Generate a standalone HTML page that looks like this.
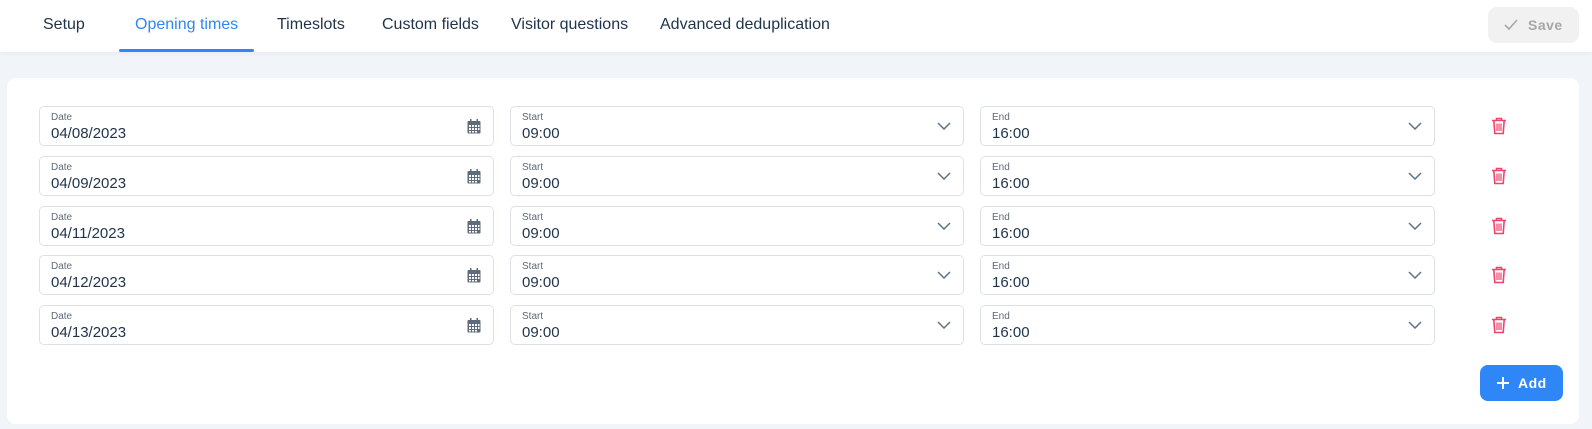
<!DOCTYPE html>
<html><head><style>
*{box-sizing:border-box;margin:0;padding:0}
body{width:1592px;height:429px;background:#f1f5f9;font-family:"Liberation Sans",sans-serif;color:#1f3349;position:relative;overflow:hidden}
.hdr{position:absolute;left:0;top:0;width:1592px;height:52px;background:#fff;box-shadow:0 2px 6px rgba(0,0,0,.04)}
.tab{position:absolute;top:16px;font-size:16px;color:#1f3349;white-space:nowrap}
.tab.act{color:#2f86f6}
.ul{position:absolute;left:119px;top:49px;width:135px;height:3px;background:#2f86f6;border-radius:2px}
.save{position:absolute;left:1488px;top:7px;width:91px;height:36px;background:#f1f1f1;border-radius:9px;color:#a7a7a7;font-size:14px;font-weight:bold;letter-spacing:.5px}
.card{position:absolute;left:7px;top:78px;width:1572px;height:346px;background:#fff;border-radius:9px}
.f{position:absolute;height:40px;border:1px solid #dde1e6;border-radius:5px;background:#fff}
.f .l{position:absolute;left:11px;top:5px;font-size:10px;color:#5d6b7a}
.f .v{position:absolute;left:11px;top:18px;font-size:15px;color:#1f3349}
.f svg{position:absolute}
.add{position:absolute;left:1480px;top:365px;width:83px;height:36px;background:#2f86f6;border-radius:8px;color:#fff;font-size:14px;font-weight:bold;letter-spacing:.5px}
</style></head><body>
<div class="hdr">
<div class="tab" style="left:43px">Setup</div>
<div class="tab act" style="left:135px">Opening times</div>
<div class="tab" style="left:277px">Timeslots</div>
<div class="tab" style="left:382px">Custom fields</div>
<div class="tab" style="left:511px">Visitor questions</div>
<div class="tab" style="left:660px">Advanced deduplication</div>
<div class="ul"></div>
<div class="save"><svg style="position:absolute;left:15px;top:11px" width="16" height="14" viewBox="0 0 16 14"><path d="M2 7l4 4 8-9" fill="none" stroke="#a7a7a7" stroke-width="1.6"/></svg><span style="position:absolute;left:40px;top:10px">Save</span></div>
</div>
<div class="card"></div>
<div id="rows"></div>
<div class="add"><svg style="position:absolute;left:16px;top:11px" width="14" height="14" viewBox="0 0 14 14"><path d="M7 1v12M1 7h12" stroke="#fff" stroke-width="2"/></svg><span style="position:absolute;left:38px;top:10px">Add</span></div>
<script>
var d=["04/08/2023","04/09/2023","04/11/2023","04/12/2023","04/13/2023"],h="";
var cal='<svg width="14" height="15" viewBox="0 0 14 15" style="left:427px;top:12px"><rect x="0.5" y="2" width="13" height="12.5" rx="1" fill="#5d6b7a"/><rect x="3" y="0" width="1.5" height="3" fill="#5d6b7a"/><rect x="9.5" y="0" width="1.5" height="3" fill="#5d6b7a"/><g fill="#fff"><rect x="2" y="6" width="2" height="2"/><rect x="5" y="6" width="2" height="2"/><rect x="8" y="6" width="2" height="2"/><rect x="11" y="6" width="1.5" height="2"/><rect x="2" y="9" width="2" height="2"/><rect x="5" y="9" width="2" height="2"/><rect x="8" y="9" width="2" height="2"/><rect x="11" y="9" width="1.5" height="2"/><rect x="2" y="12" width="2" height="1.5"/><rect x="5" y="12" width="2" height="1.5"/><rect x="8" y="12" width="2" height="1.5"/></g></svg>';
var chev=function(x){return '<svg width="14" height="8" viewBox="0 0 14 8" style="left:'+x+'px;top:15px"><path d="M1 1l6 6 6-6" fill="none" stroke="#5d7388" stroke-width="1.5"/></svg>'};
var tr='<svg width="16" height="18" viewBox="0 0 16 18"><path d="M1 3.5h14M5.5 3.5V1.5h5v2M2.8 3.5l1 13h8.4l1-13" fill="none" stroke="#f0426b" stroke-width="1.6"/><path d="M6 6.5v7.5M8 6.5v7.5M10 6.5v7.5" stroke="#f0426b" stroke-width="1.2"/></svg>';
for(var i=0;i<5;i++){var y=Math.round(106+i*49.75);
h+='<div class="f" style="left:39px;top:'+y+'px;width:455px"><div class="l">Date</div><div class="v">'+d[i]+'</div>'+cal+'</div>';
h+='<div class="f" style="left:510px;top:'+y+'px;width:454px"><div class="l">Start</div><div class="v">09:00</div>'+chev(426)+'</div>';
h+='<div class="f" style="left:980px;top:'+y+'px;width:455px"><div class="l">End</div><div class="v">16:00</div>'+chev(427)+'</div>';
h+='<div style="position:absolute;left:1491px;top:'+(y+11)+'px">'+tr+'</div>';}
document.getElementById('rows').innerHTML=h;
</script>
</body></html>
